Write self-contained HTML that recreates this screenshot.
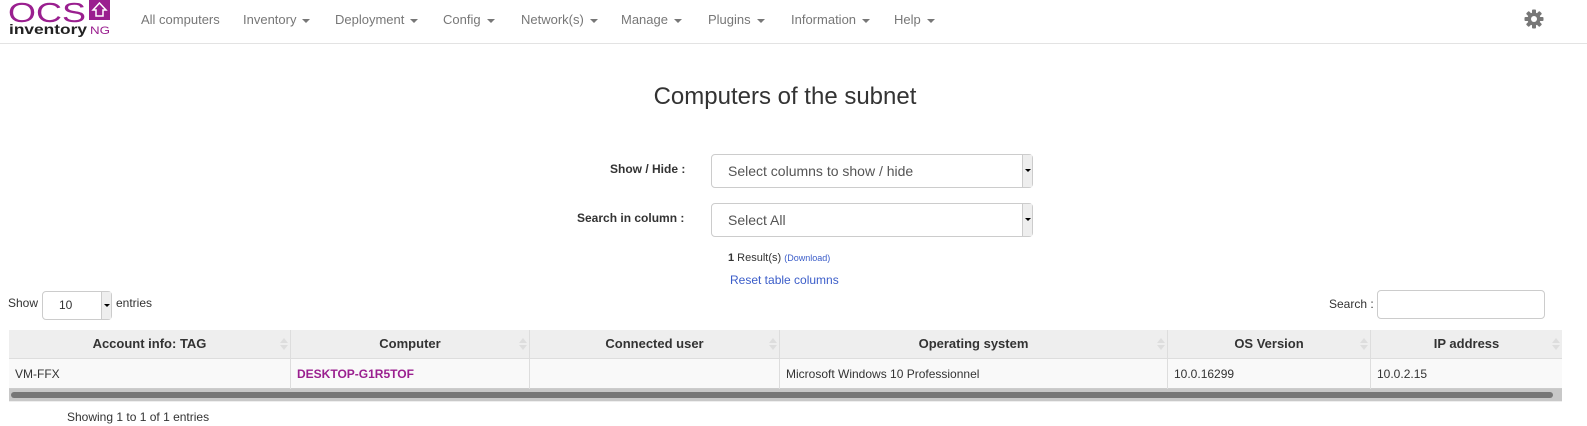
<!DOCTYPE html><html><head><style>
body{margin:0;width:1587px;height:426px;overflow:hidden;background:#fff;font-family:"Liberation Sans",sans-serif;color:#333;position:relative}
.a{position:absolute;white-space:nowrap}
.nav{position:absolute;left:0;top:0;width:1587px;height:43px;border-bottom:1px solid #e3e3e3;background:#fff}
.ni{position:absolute;top:12px;font-size:13px;color:#777}
.car{display:inline-block;width:0;height:0;border-left:4px solid transparent;border-right:4px solid transparent;border-top:4px solid #777;vertical-align:middle;margin-left:6px}
.sel{position:absolute;border:1px solid #ccc;border-radius:4px;background:#fff;font-size:14px;color:#555}
.sel .ar{position:absolute;right:0;top:0;bottom:0;width:9px;background:#eee;border-left:1px solid #ccc}
.sel .ar:after{content:"";position:absolute;left:2px;top:45%;border-left:3px solid transparent;border-right:3px solid transparent;border-top:3px solid #000}
th,td{padding:0;font-size:13px}
.th{position:absolute;top:330px;height:28px;background:#eee;border-right:1px solid #ddd;font-weight:bold;font-size:13px;text-align:center;line-height:28px;box-sizing:border-box}
.td{position:absolute;top:359px;height:30px;border-right:1px solid #ddd;font-size:12px;line-height:31px;padding-left:6px;box-sizing:border-box}
.srt{position:absolute;right:6px;top:8px;width:0;height:0}
.srt:before{content:"";position:absolute;left:-4px;top:0;border-left:4px solid transparent;border-right:4px solid transparent;border-bottom:5px solid #ddd}
.srt:after{content:"";position:absolute;left:-4px;top:7px;border-left:4px solid transparent;border-right:4px solid transparent;border-top:5px solid #ddd}
</style></head><body>
<div class="nav">
<svg class="a" style="left:8px;top:0" width="104" height="38" viewBox="0 0 104 38">
<text x="0" y="22" font-family="Liberation Sans" font-size="28" fill="#9a1f8f" font-weight="normal" textLength="78" lengthAdjust="spacingAndGlyphs">OCS</text>
<rect x="81" y="0" width="21" height="20" fill="#9a1f8f"/>
<path d="M91.5 3 L98 10 L95 10 L95 16 L88 16 L88 10 L85 10 Z" fill="none" stroke="#fff" stroke-width="1.5"/>
<text x="1" y="34" font-family="Liberation Sans" font-size="14" font-weight="bold" fill="#222" textLength="78" lengthAdjust="spacingAndGlyphs">inventory</text>
<text x="82" y="34" font-family="Liberation Sans" font-size="11" fill="#9a1f8f" textLength="20" lengthAdjust="spacingAndGlyphs">NG</text>
</svg>
<div class="ni" style="left:141px">All computers</div>
<div class="ni" style="left:243px">Inventory<span class="car"></span></div>
<div class="ni" style="left:335px">Deployment<span class="car"></span></div>
<div class="ni" style="left:443px">Config<span class="car"></span></div>
<div class="ni" style="left:521px">Network(s)<span class="car"></span></div>
<div class="ni" style="left:621px">Manage<span class="car"></span></div>
<div class="ni" style="left:708px">Plugins<span class="car"></span></div>
<div class="ni" style="left:791px">Information<span class="car"></span></div>
<div class="ni" style="left:894px">Help<span class="car"></span></div>
<svg class="a" style="left:1524px;top:9px" width="20" height="20" viewBox="0 0 20 20"><g fill="#777"><circle cx="10" cy="10" r="6.5"/><rect x="8" y="0.5" width="4" height="19" rx="1"/><rect x="8" y="0.5" width="4" height="19" rx="1" transform="rotate(45 10 10)"/><rect x="8" y="0.5" width="4" height="19" rx="1" transform="rotate(90 10 10)"/><rect x="8" y="0.5" width="4" height="19" rx="1" transform="rotate(135 10 10)"/></g><circle cx="10" cy="10" r="3" fill="#fff"/></svg>
</div>
<div class="a" style="left:0;width:1570px;top:83px;text-align:center;font-size:24px;color:#333">Computers of the subnet</div>
<div class="a" style="left:610px;top:162px;font-size:12px;font-weight:bold">Show / Hide :</div>
<div class="a" style="left:577px;top:211px;font-size:12px;font-weight:bold">Search in column :</div>
<div class="sel" style="left:711px;top:154px;width:320px;height:32px"><span class="a" style="left:16px;top:8px">Select columns to show / hide</span><div class="ar"></div></div>
<div class="sel" style="left:711px;top:203px;width:320px;height:32px"><span class="a" style="left:16px;top:8px">Select All</span><div class="ar"></div></div>
<div class="a" style="left:728px;top:252px;font-size:11px"><b>1</b> Result(s) <span style="color:#3b5dc9;font-size:9px">(Download)</span></div>
<div class="a" style="left:730px;top:273px;font-size:12px;color:#3b5dc9">Reset table columns</div>
<div class="a" style="left:8px;top:296px;font-size:12px">Show</div>
<div class="sel" style="left:42px;top:291px;width:68px;height:27px;font-size:12px"><span class="a" style="left:16px;top:6px;color:#333">10</span><div class="ar"></div></div>
<div class="a" style="left:116px;top:296px;font-size:12px">entries</div>
<div class="a" style="left:1329px;top:297px;font-size:12px">Search :</div>
<div class="a" style="left:1377px;top:290px;width:166px;height:27px;border:1px solid #ccc;border-radius:4px"></div>
<div class="a" style="left:9px;top:330px;width:1553px;height:72px;background:#eee"></div>
<div class="th" style="left:9px;width:282px">Account info: TAG<span class="srt"></span></div>
<div class="th" style="left:291px;width:239px">Computer<span class="srt"></span></div>
<div class="th" style="left:530px;width:250px">Connected user<span class="srt"></span></div>
<div class="th" style="left:780px;width:388px">Operating system<span class="srt"></span></div>
<div class="th" style="left:1168px;width:203px">OS Version<span class="srt"></span></div>
<div class="th" style="left:1371px;width:191px;border-right:none">IP address<span class="srt"></span></div>
<div class="a" style="left:9px;top:358px;width:1553px;height:31px;background:#f9f9f9;border-top:1px solid #ddd;border-bottom:1px solid #ccc;box-sizing:border-box"></div>
<div class="td" style="left:9px;width:282px">VM-FFX</div>
<div class="td" style="left:291px;width:239px;color:#9a1f8f;font-weight:bold">DESKTOP-G1R5TOF</div>
<div class="td" style="left:530px;width:250px"></div>
<div class="td" style="left:780px;width:388px">Microsoft Windows 10 Professionnel</div>
<div class="td" style="left:1168px;width:203px">10.0.16299</div>
<div class="td" style="left:1371px;width:191px;border-right:none">10.0.2.15</div>
<div class="a" style="left:9px;top:389px;width:1553px;height:12px;background:#c8c8c8"></div>
<div class="a" style="left:11px;top:392px;width:1542px;height:6px;background:#777;border-radius:3px"></div>
<div class="a" style="left:67px;top:410px;font-size:12px">Showing 1 to 1 of 1 entries</div>
</body></html>
